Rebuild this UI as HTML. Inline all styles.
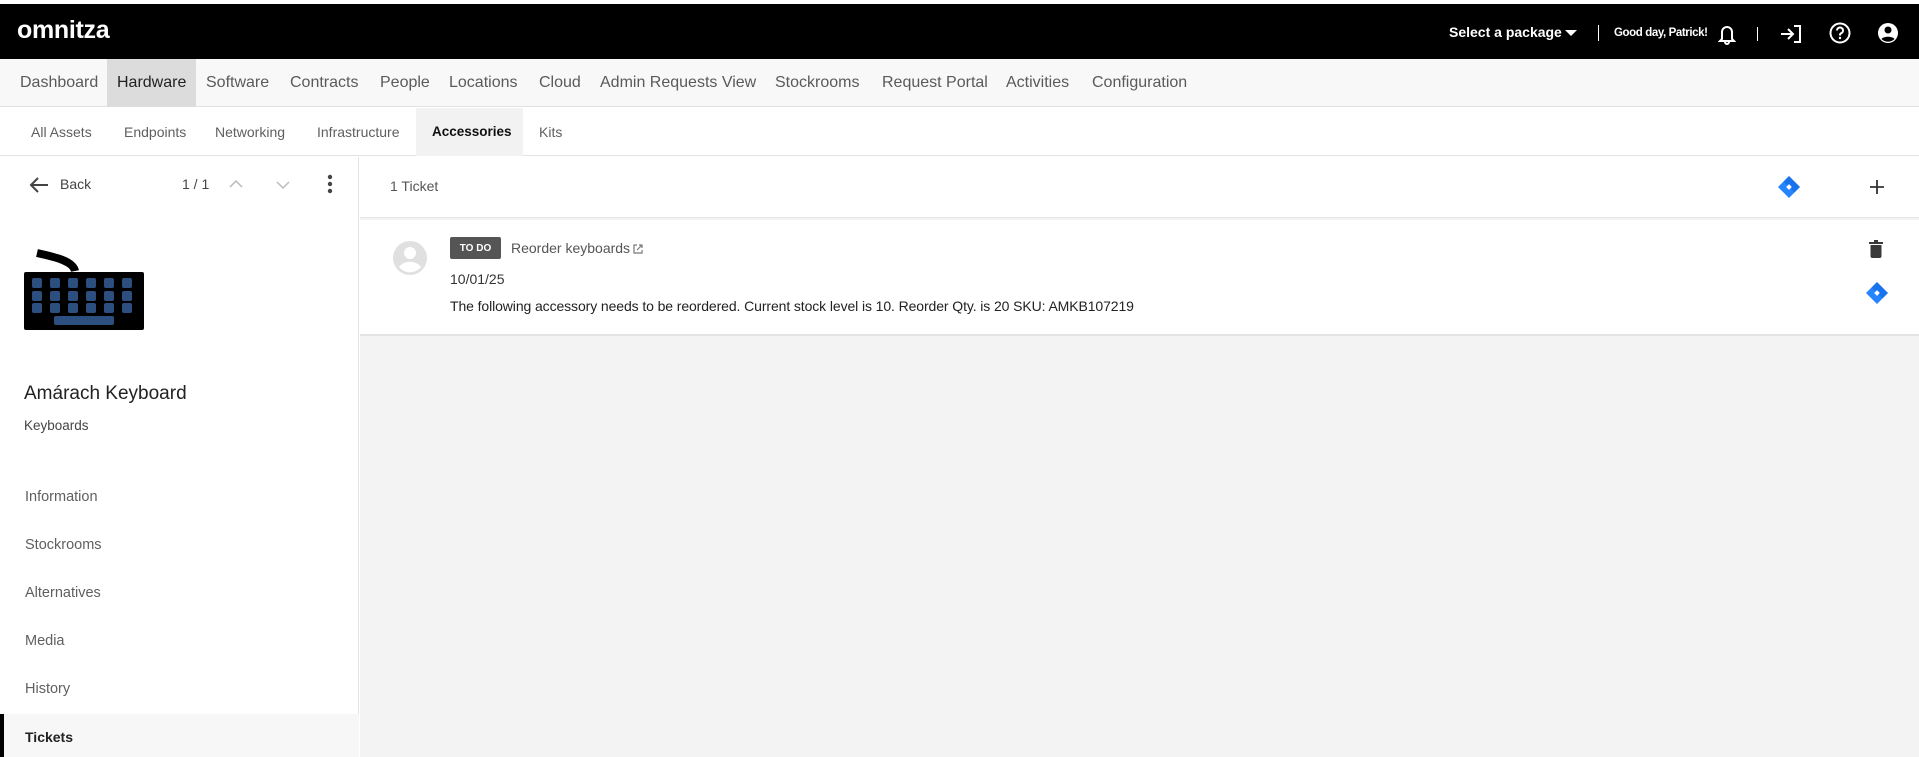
<!DOCTYPE html>
<html><head><meta charset="utf-8"><style>
*{margin:0;padding:0;box-sizing:border-box}
body{width:1919px;height:757px;overflow:hidden;background:#fff;font-family:"Liberation Sans",sans-serif;position:relative}
.a{position:absolute;white-space:nowrap}
#top{position:absolute;left:0;top:4px;width:1919px;height:55px;background:#000}
#nav{position:absolute;left:0;top:59px;width:1919px;height:48px;background:#f8f8f8;border-bottom:1px solid #e2e2e2}
#sub{position:absolute;left:0;top:108px;width:1919px;height:48px;background:#fff;border-bottom:1px solid #e2e2e2}
.n{font-size:16px;color:#5a5a5a;top:15px}
.s{font-size:14px;color:#5f5f5f;top:16px}
#left{position:absolute;left:0;top:157px;width:359px;height:600px;border-right:1px solid #e4e4e4;background:#fff}
#right{position:absolute;left:360px;top:157px;width:1559px;height:600px;background:#f3f3f3}
.m{font-size:14.5px;color:#5f5f5f;left:25px}
</style></head><body>
<div id="top">
 <div class="a" style="left:17px;top:12px;color:#fff;font-size:25px;font-weight:bold;letter-spacing:-0.3px">omnitza</div>
 <div class="a" style="left:1449px;top:20px;color:#fff;font-size:14px;font-weight:bold">Select a package</div>
 <svg class="a" style="left:1565px;top:26px" width="12" height="7"><path d="M0 0h12L6 6z" fill="#fff"/></svg>
 <div class="a" style="left:1598px;top:21px;width:1px;height:16px;background:#fff"></div>
 <div class="a" style="left:1614px;top:23px;color:#fff;font-size:11.5px;font-weight:bold;letter-spacing:-0.4px">Good day, Patrick!</div>
 <svg class="a" style="left:1718px;top:19px" width="18" height="22" viewBox="0 0 18 22"><path d="M4 16V9a5 5 0 0 1 10 0v7l2 2H2z M7 19a2 2 0 0 0 4 0" fill="none" stroke="#fff" stroke-width="2"/></svg>
 <div class="a" style="left:1757px;top:23px;width:1px;height:14px;background:#fff"></div>
 <svg class="a" style="left:1780px;top:20px" width="22" height="20" viewBox="0 0 22 20"><path d="M1 10h12M8 5l5 5-5 5M14 2h6v16h-6" fill="none" stroke="#fff" stroke-width="2"/></svg>
 <svg class="a" style="left:1829px;top:18px" width="22" height="22" viewBox="0 0 22 22"><circle cx="11" cy="11" r="9.5" fill="none" stroke="#fff" stroke-width="2"/><path d="M8 8.5a3 3 0 1 1 4 2.8c-1 .5-1 1.2-1 2.2" fill="none" stroke="#fff" stroke-width="2"/><circle cx="11" cy="16" r="1.2" fill="#fff"/></svg>
 <svg class="a" style="left:1877px;top:18px" width="22" height="22" viewBox="0 0 22 22"><circle cx="11" cy="11" r="10" fill="#fff"/><circle cx="11" cy="8" r="3.5" fill="#000"/><path d="M4.5 17c2-3 11-3 13 0a9 9 0 0 1-13 0z" fill="#000"/></svg>
</div>
<div id="nav">
 <div class="a" style="left:107px;top:0;width:89px;height:48px;background:#dcdcdc"></div>
 <div class="a n" style="left:20px">Dashboard</div>
 <div class="a n" style="left:117px;color:#222">Hardware</div>
 <div class="a n" style="left:206px">Software</div>
 <div class="a n" style="left:290px">Contracts</div>
 <div class="a n" style="left:380px">People</div>
 <div class="a n" style="left:449px">Locations</div>
 <div class="a n" style="left:539px">Cloud</div>
 <div class="a n" style="left:600px">Admin Requests View</div>
 <div class="a n" style="left:775px">Stockrooms</div>
 <div class="a n" style="left:882px">Request Portal</div>
 <div class="a n" style="left:1006px">Activities</div>
 <div class="a n" style="left:1092px">Configuration</div>
</div>
<div id="sub">
 <div class="a" style="left:416px;top:0;width:107px;height:48px;background:#f2f2f2"></div>
 <div class="a s" style="left:31px">All Assets</div>
 <div class="a s" style="left:124px">Endpoints</div>
 <div class="a s" style="left:215px">Networking</div>
 <div class="a s" style="left:317px">Infrastructure</div>
 <div class="a s" style="left:432px;color:#111;font-weight:bold;font-size:13.5px">Accessories</div>
 <div class="a s" style="left:539px">Kits</div>
</div>
<div id="left">
 <svg class="a" style="left:29px;top:19px" width="20" height="18" viewBox="0 0 20 18"><path d="M19 9H2M9 2L2 9l7 7" fill="none" stroke="#444" stroke-width="2"/></svg>
 <div class="a" style="left:60px;top:19px;font-size:14px;color:#444">Back</div>
 <div class="a" style="left:182px;top:19px;font-size:14px;color:#444">1 / 1</div>
 <svg class="a" style="left:229px;top:22px" width="14" height="9"><path d="M1 8l6-6 6 6" fill="none" stroke="#bbb" stroke-width="1.5"/></svg>
 <svg class="a" style="left:276px;top:24px" width="14" height="9"><path d="M1 1l6 6 6-6" fill="none" stroke="#bbb" stroke-width="1.5"/></svg>
 <svg class="a" style="left:327px;top:17px" width="6" height="20"><circle cx="3" cy="3" r="2.2" fill="#444"/><circle cx="3" cy="10" r="2.2" fill="#444"/><circle cx="3" cy="17" r="2.2" fill="#444"/></svg>
 <svg class="a" style="left:24px;top:89px" width="122" height="85" viewBox="0 0 122 85">
  <path d="M13 7c18 4 36 8 38 18" fill="none" stroke="#000" stroke-width="8"/>
  <rect x="0" y="26" width="120" height="58" rx="2" fill="#000"/>
  <g fill="#2d4f7f">
   <rect x="8" y="32" width="10" height="10" rx="2"/><rect x="26" y="32" width="10" height="10" rx="2"/><rect x="44" y="32" width="10" height="10" rx="2"/><rect x="62" y="32" width="10" height="10" rx="2"/><rect x="80" y="32" width="10" height="10" rx="2"/><rect x="98" y="32" width="10" height="10" rx="2"/>
   <rect x="8" y="45" width="10" height="10" rx="2"/><rect x="26" y="45" width="10" height="10" rx="2"/><rect x="44" y="45" width="10" height="10" rx="2"/><rect x="62" y="45" width="10" height="10" rx="2"/><rect x="80" y="45" width="10" height="10" rx="2"/><rect x="98" y="45" width="10" height="10" rx="2"/>
   <rect x="8" y="57" width="10" height="10" rx="2"/><rect x="26" y="57" width="10" height="10" rx="2"/><rect x="44" y="57" width="10" height="10" rx="2"/><rect x="62" y="57" width="10" height="10" rx="2"/><rect x="80" y="57" width="10" height="10" rx="2"/><rect x="98" y="57" width="10" height="10" rx="2"/>
   <rect x="30" y="70" width="60" height="9" rx="2"/>
  </g>
 </svg>
 <div class="a" style="left:24px;top:226px;font-size:19px;color:#222">Amárach Keyboard</div>
 <div class="a" style="left:24px;top:261px;font-size:13.5px;color:#444">Keyboards</div>
 <div class="a m" style="top:332px">Information</div>
 <div class="a m" style="top:380px">Stockrooms</div>
 <div class="a m" style="top:428px">Alternatives</div>
 <div class="a m" style="top:476px">Media</div>
 <div class="a m" style="top:524px">History</div>
 <div class="a" style="left:0;top:557px;width:359px;height:43px;background:#f7f7f7"></div>
 <div class="a" style="left:0;top:557px;width:4px;height:43px;background:#000"></div>
 <div class="a m" style="top:572px;color:#222;font-weight:bold;font-size:14px">Tickets</div>
</div>
<div id="right">
 <div class="a" style="left:0;top:0;width:1559px;height:61px;background:#fff;border-bottom:1px solid #e6e6e6"></div>
 <div class="a" style="left:30px;top:21px;font-size:14px;color:#555">1 Ticket</div>
 <svg class="a" style="left:1418px;top:19px" width="22" height="22" viewBox="0 0 22 22"><path d="M11 0L22 11 11 22 0 11z" fill="#2684ff"/><path d="M11 0L22 11 16.5 16.5 5.5 5.5z" fill="#0052cc" opacity=".35"/><rect x="9" y="9" width="4" height="4" transform="rotate(45 11 11)" fill="#fff"/></svg>
 <svg class="a" style="left:1509px;top:22px" width="16" height="16"><path d="M8 1v14M1 8h14" stroke="#333" stroke-width="1.8"/></svg>
 <div class="a" style="left:0;top:63px;width:1559px;height:116px;background:#fff;border-bottom:2px solid #e3e3e3"></div>
 <svg class="a" style="left:32px;top:83px" width="36" height="36" viewBox="0 0 36 36"><circle cx="18" cy="18" r="17" fill="#e0e0e0"/><circle cx="18" cy="13" r="6" fill="#fff"/><path d="M7 27c5-7 17-7 22 0a14 14 0 0 1-22 0z" fill="#fff"/></svg>
 <div class="a" style="left:90px;top:80px;width:51px;height:22px;background:#555;border-radius:2px;color:#fff;font-size:10px;font-weight:bold;text-align:center;line-height:23px">TO DO</div>
 <div class="a" style="left:151px;top:83px;font-size:14px;color:#555">Reorder keyboards</div>
 <svg class="a" style="left:273px;top:87px" width="10" height="10" viewBox="0 0 10 10"><path d="M4 1H1v8h8V6M6 1h3v3M9 1L4 6" fill="none" stroke="#777" stroke-width="1.2"/></svg>
 <div class="a" style="left:90px;top:114px;font-size:14px;color:#333">10/01/25</div>
 <div class="a" style="left:90px;top:141px;font-size:14px;color:#222;letter-spacing:-0.1px">The following accessory needs to be reordered. Current stock level is 10. Reorder Qty. is 20 SKU: AMKB107219</div>
 <svg class="a" style="left:1509px;top:83px" width="14" height="18" viewBox="0 0 14 18"><path d="M0 2h14v2H0zM5 0h4v2H5zM1.5 5h11v11a2 2 0 0 1-2 2h-7a2 2 0 0 1-2-2z" fill="#3a3a3a"/></svg>
 <svg class="a" style="left:1506px;top:125px" width="22" height="22" viewBox="0 0 22 22"><path d="M11 0L22 11 11 22 0 11z" fill="#2684ff"/><path d="M11 0L22 11 16.5 16.5 5.5 5.5z" fill="#0052cc" opacity=".35"/><rect x="9" y="9" width="4" height="4" transform="rotate(45 11 11)" fill="#fff"/></svg>
</div>
</body></html>
